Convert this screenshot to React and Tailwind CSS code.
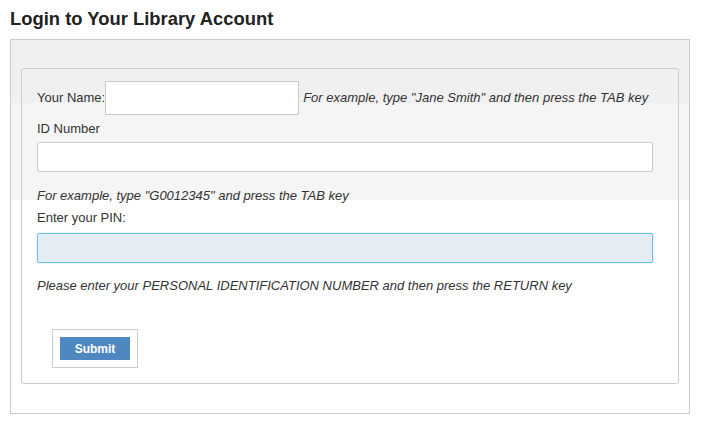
export default function App() {
  return (
    <div className="min-h-screen bg-white px-[10px] pt-[8px] text-[#333] font-['Liberation_Sans',Arial,sans-serif]">
      <h1 className="text-[18.4px] font-bold leading-[22px] text-[#222]">Login to Your Library Account</h1>

      <div className="mt-[9px] w-[680px] border border-[#cccccc] bg-[linear-gradient(to_bottom,#f0f0f0_0px,#f0f0f0_63px,#f5f5f5_63px,#f5f5f5_160px,#ffffff_160px)] px-[10px] pt-[28px] pb-[29px]">
        <div className="rounded-[3px] border border-[#cccccc] pl-[15px] pr-[25px] pt-[12px] pb-[15px]">
          <div className="flex items-center text-[13px]">
            <label className="leading-[16px]">Your Name:</label>
            <input type="text" className="h-[34px] w-[194px] border border-[#cccccc] bg-white outline-none" />
            <span className="ml-[4px] italic">For example, type "Jane Smith" and then press the TAB key</span>
          </div>

          <label className="mt-[4px] block text-[13px] leading-[20px]">ID Number</label>
          <input type="text" className="mt-[3px] block h-[30px] w-full rounded-[2px] border border-[#cccccc] bg-white outline-none" />
          <p className="mt-[15px] text-[13px] italic leading-[18px]">For example, type "G0012345" and press the TAB key</p>

          <label className="mt-[3px] block text-[13px] leading-[20px]">Enter your PIN:</label>
          <input type="password" className="mt-[5px] block h-[30px] w-full rounded-[2px] border border-[#66c0f4] bg-[#e5ecf4] shadow-[0_0_0_1px_#f2f5f8] outline-none" />
          <p className="mt-[14px] text-[13px] italic leading-[18px]">Please enter your PERSONAL IDENTIFICATION NUMBER and then press the RETURN key</p>

          <div className="ml-[15px] mt-[34px] inline-block border border-[#cccccc] px-[7px] py-[7px]">
            <button type="button" className="block h-[23px] w-[70px] bg-[#4f87c0] text-[12px] font-bold text-white">Submit</button>
          </div>
        </div>
      </div>
    </div>
  );
}
